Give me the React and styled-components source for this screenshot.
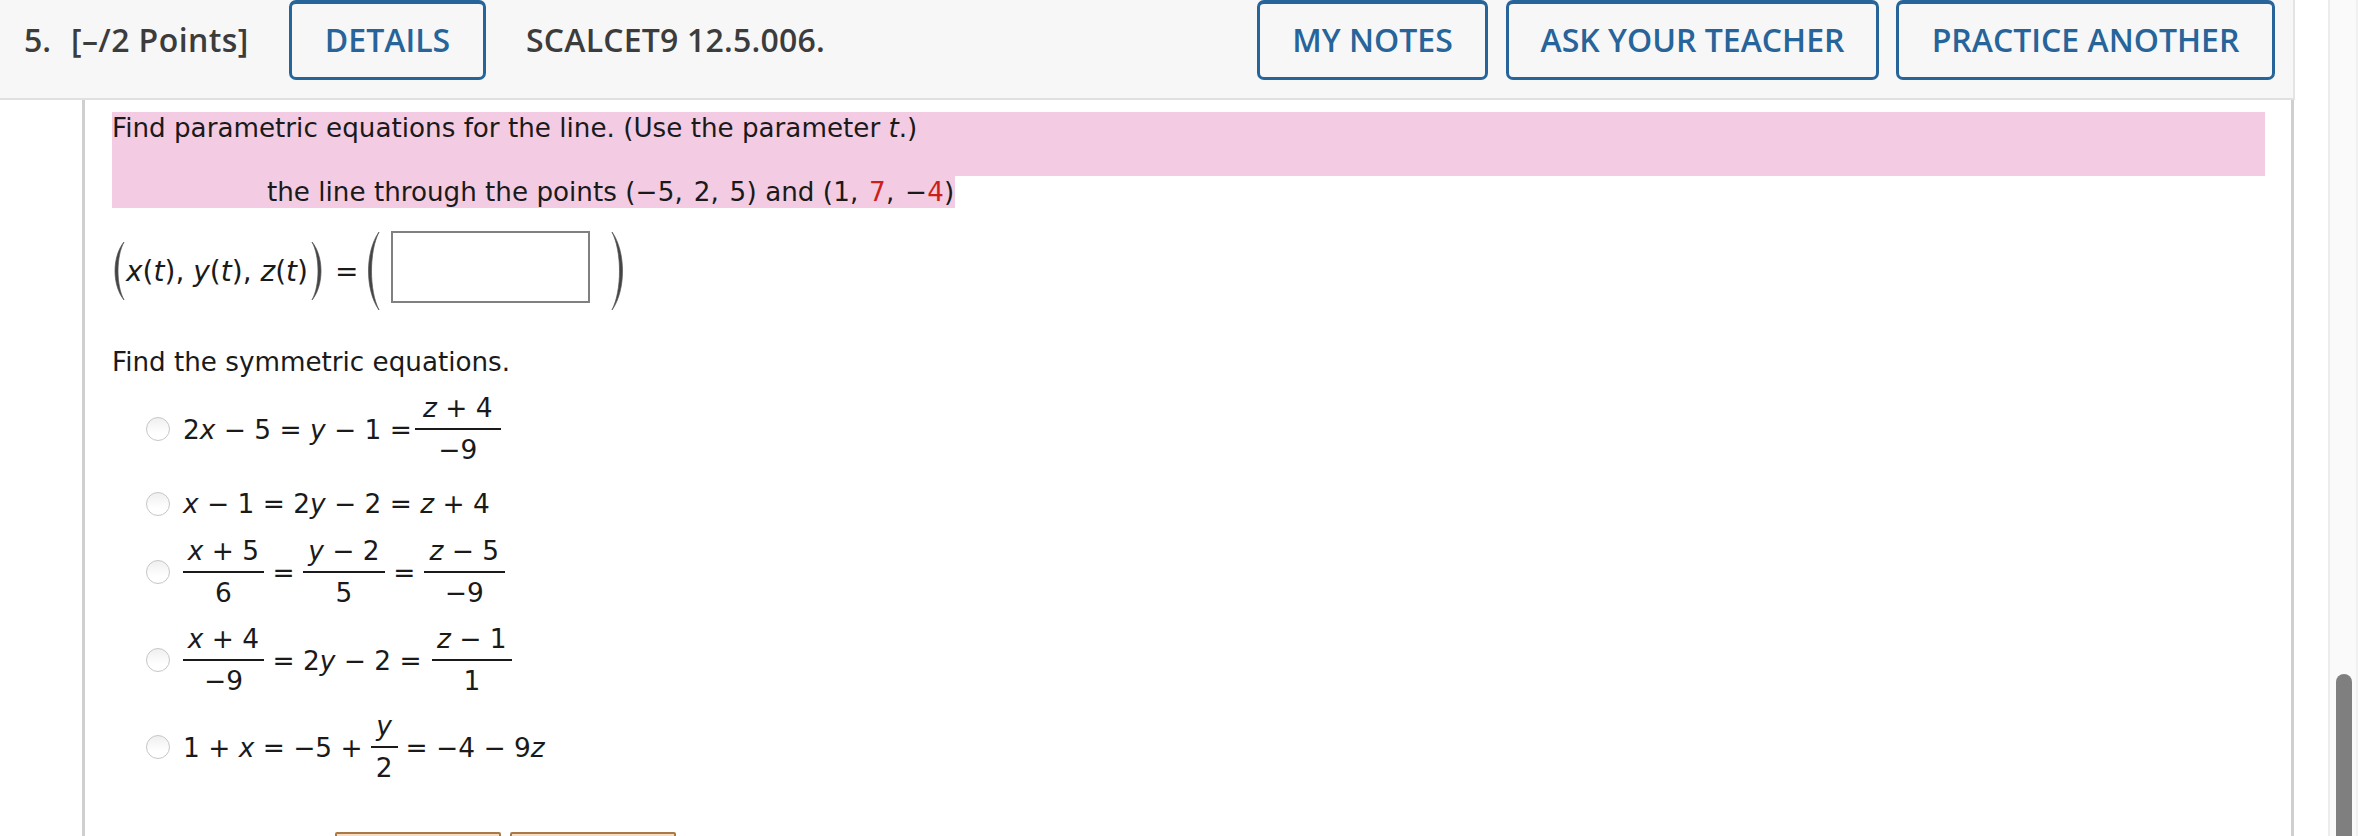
import styled, { createGlobalStyle } from "styled-components";

const GlobalStyle = createGlobalStyle`
  html, body {
    margin: 0;
    height: 100%;
    background: #fff;
    overflow: hidden;
  }
`;

const Page = styled.div`
  display: flex;
  width: 2358px;
  height: 836px;
  overflow: hidden;
`;

const Main = styled.div`
  width: 2328px;
  flex: none;
`;

const Scrollbar = styled.div`
  flex: 1;
  background: #fafafa;
  border-left: 2px solid #ececec;
  border-right: 2px solid #f0f0f0;
  padding: 674px 4px 0 6px;
`;

const Thumb = styled.div`
  height: 200px;
  background: #7f7f7f;
  border-radius: 8px;
`;

const Header = styled.div`
  display: flex;
  align-items: flex-start;
  width: 2295px;
  height: 100px;
  padding-right: 18px;
  box-sizing: border-box;
  background: #f7f7f7;
  border-bottom: 2px solid #e0e0e0;
  border-right: 2px solid #e4e4e4;
  font-family: "Open Sans", sans-serif;
  font-weight: 600;
  font-size: 32px;
  color: #3c3c3c;
`;

const Number = styled.span`
  margin: 18px 0 0 24px;
  width: 47px;
`;

const Points = styled.span`
  margin-top: 18px;
  width: 218px;
  letter-spacing: 0.4px;
`;

const Code = styled.span`
  margin: 18px 0 0 40px;
  flex: 1;
  letter-spacing: 0.2px;
`;

const OutlineButton = styled.button`
  height: 80px;
  width: ${(p) => p.$width}px;
  margin-left: ${(p) => p.$gap || 0}px;
  padding: 0 0 2px;
  flex: none;
  background: transparent;
  border: 3px solid #26649a;
  border-top-width: 4px;
  border-radius: 7px;
  color: #26649a;
  font: inherit;
`;

const Body = styled.div`
  width: 2212px;
  height: 736px;
  margin-left: 82px;
  padding: 12px 0 0 27px;
  box-sizing: border-box;
  border-left: 3px solid #cfcfcf;
  border-right: 3px solid #cfcfcf;
  font-family: "DejaVu Sans", Verdana, sans-serif;
  font-size: 26.2px;
  color: #1a1a1a;
`;

const PromptLine = styled.div`
  width: 2153px;
  height: 64px;
  line-height: 33px;
  background: #f3cce3;
  white-space: nowrap;
`;

const PointsLine = styled.div`
  height: 32px;
  line-height: 33px;
  padding-left: 155px;
  width: 688px;
  background: #f3cce3;
  white-space: nowrap;
`;

const Coords = styled.span`
  letter-spacing: 0.2px;
  word-spacing: 2px;
`;

const Red = styled.span`
  color: #cc1f1a;
`;

const Var = styled.i`
  font-style: italic;
`;

const EquationRow = styled.div`
  display: flex;
  align-items: center;
  height: 82px;
  margin-top: 22px;
  font-size: 28px;
`;

const Paren = styled.svg`
  flex: none;
  display: block;
  transform: ${(p) => (p.$flip ? "scaleX(-1)" : "none")};
  margin-left: ${(p) => p.$left || 0}px;
`;

const Equals = styled.span`
  margin: 0 6px 0 11px;
`;

const AnswerBox = styled.input`
  width: 199px;
  height: 72px;
  box-sizing: border-box;
  margin: 0 20px 8px 10px;
  padding: 0;
  background: #fff;
  border: 2px solid #808080;
  outline: none;
`;

const SymmetricPrompt = styled.div`
  margin-top: 32px;
  line-height: 36px;
`;

const Options = styled.div`
  margin: 11px 0 0 31px;
  font-size: 26.4px;
`;

const Option = styled.label`
  display: flex;
  align-items: center;
  min-height: 30px;
  margin-top: ${(p) => p.$top || 0}px;
  white-space: pre;
`;

const Radio = styled.input.attrs({ type: "radio" })`
  appearance: none;
  flex: none;
  width: 24px;
  height: 24px;
  margin: 0 13px 0 3px;
  border-radius: 50%;
  border: 1px solid #c6c6c6;
  background: linear-gradient(#efefef, #ffffff 70%);
`;

const Frac = styled.span`
  display: inline-flex;
  flex-direction: column;
  align-items: center;
  width: ${(p) => p.$width}px;
  margin: 0 ${(p) => p.$side ?? 0}px;
`;

const Num = styled.span`
  height: 37px;
  line-height: 34px;
  border-bottom: 2px solid #1a1a1a;
  align-self: stretch;
  text-align: center;
`;

const Den = styled.span`
  height: 37px;
  line-height: 40px;
`;

const Actions = styled.div`
  display: flex;
  gap: 9px;
  margin: 47px 0 0 223px;
`;

const SubmitButton = styled.button`
  width: 166px;
  height: 44px;
  padding: 0;
  background: #fdf0e0;
  border: 2px solid #a97a45;
  border-radius: 2px;
  box-shadow: inset 0 0 0 2px #f6dcc0;
`;

const BigParen = ({ flip, small, left }) => {
  const w = small ? 14 : 16;
  const h = small ? 58 : 78;
  return (
    <Paren width={w} height={h} viewBox={`0 0 ${w} ${h}`} $flip={flip} $left={left}>
      <path
        d={`M${w - 2} 0 C0 ${h * 0.25} 0 ${h * 0.75} ${w - 2} ${h} C4 ${h * 0.75} 4 ${h * 0.25} ${w - 2} 0 Z`}
        fill="#444"
        stroke="#555"
        strokeWidth="0.7"
      />
    </Paren>
  );
};

const App = () => (
  <>
    <GlobalStyle />
    <Page>
      <Main>
        <Header>
          <Number>5.</Number>
          <Points>[–/2 Points]</Points>
          <OutlineButton $width={197}>DETAILS</OutlineButton>
          <Code>SCALCET9 12.5.006.</Code>
          <OutlineButton $width={231}>MY NOTES</OutlineButton>
          <OutlineButton $width={373} $gap={18}>ASK YOUR TEACHER</OutlineButton>
          <OutlineButton $width={379} $gap={17}>PRACTICE ANOTHER</OutlineButton>
        </Header>
        <Body>
          <PromptLine>
            Find parametric equations for the line. (Use the parameter <Var>t</Var>.)
          </PromptLine>
          <PointsLine>
            the line through the points <Coords>(−5, 2, 5)</Coords> and{" "}
            <Coords>(1, <Red>7</Red>, −<Red>4</Red>)</Coords>
          </PointsLine>
          <EquationRow>
            <BigParen small />
            <span>
              <Var>x</Var>(<Var>t</Var>), <Var>y</Var>(<Var>t</Var>), <Var>z</Var>(<Var>t</Var>)
            </span>
            <BigParen small flip left={2} />
            <Equals>=</Equals>
            <BigParen />
            <AnswerBox type="text" />
            <BigParen flip />
          </EquationRow>
          <SymmetricPrompt>Find the symmetric equations.</SymmetricPrompt>
          <Options>
            <Option>
              <Radio name="symmetric" />
              2<Var>x</Var> − 5 = <Var>y</Var> − 1 =
              <Frac $width={86} $side={3}>
                <Num><Var>z</Var> + 4</Num>
                <Den>−9</Den>
              </Frac>
            </Option>
            <Option $top={21}>
              <Radio name="symmetric" />
              <Var>x</Var> − 1 = 2<Var>y</Var> − 2 = <Var>z</Var> + 4
            </Option>
            <Option $top={15}>
              <Radio name="symmetric" />
              <Frac $width={81}>
                <Num><Var>x</Var> + 5</Num>
                <Den>6</Den>
              </Frac>
              {" = "}
              <Frac $width={82}>
                <Num><Var>y</Var> − 2</Num>
                <Den>5</Den>
              </Frac>
              {" = "}
              <Frac $width={81}>
                <Num><Var>z</Var> − 5</Num>
                <Den>−9</Den>
              </Frac>
            </Option>
            <Option $top={12}>
              <Radio name="symmetric" />
              <Frac $width={81}>
                <Num><Var>x</Var> + 4</Num>
                <Den>−9</Den>
              </Frac>
              {" = 2"}
              <Var>y</Var>
              {" − 2 = "}
              <Frac $width={80} $side={2}>
                <Num><Var>z</Var> − 1</Num>
                <Den>1</Den>
              </Frac>
            </Option>
            <Option $top={11}>
              <Radio name="symmetric" />
              1 + <Var>x</Var> = −5 +
              <Frac $width={27} $side={8}>
                <Num><Var>y</Var></Num>
                <Den>2</Den>
              </Frac>
              = −4 − 9<Var>z</Var>
            </Option>
          </Options>
          <Actions>
            <SubmitButton />
            <SubmitButton />
          </Actions>
        </Body>
      </Main>
      <Scrollbar>
        <Thumb />
      </Scrollbar>
    </Page>
  </>
);

export default App;
